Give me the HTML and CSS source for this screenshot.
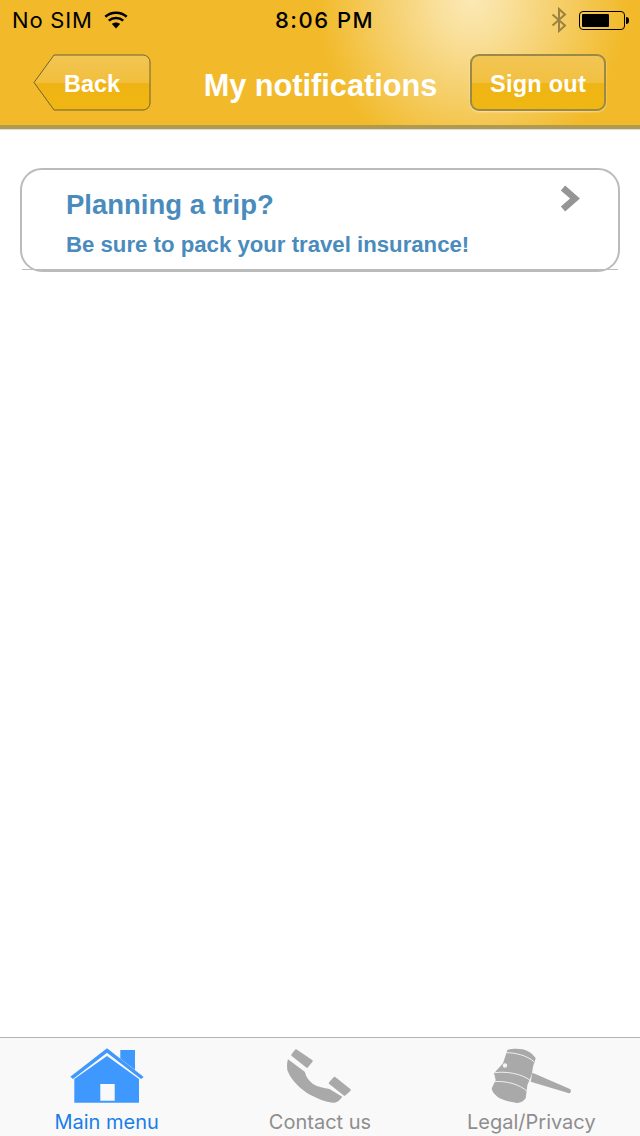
FILE: index.html
```html
<!DOCTYPE html>
<html lang="en">
<head>
    <meta charset="UTF-8">
    <meta name="viewport" content="width=device-width, initial-scale=1.0">
    <title>My notifications</title>
    <link rel="stylesheet" href="styles.css">
</head>
<body>
    <header class="top">
        <div class="status">
            <div class="status-left">
                <span class="carrier">No SIM</span>
                <svg class="wifi" width="26" height="20" viewBox="0 0 26 20">
                    <path d="M13 18.500 8.900 13.900c2.300-2 5.900-2 8.200 0z" fill="#000"/>
                    <path d="M5.800 10.600c4-3.600 10.400-3.600 14.400 0" fill="none" stroke="#000" stroke-width="2.500"/>
                    <path d="M2.300 6.800c6-5.400 15.400-5.400 21.400 0" fill="none" stroke="#000" stroke-width="2.500"/>
                </svg>
            </div>
            <div class="status-time">8:06 PM</div>
            <div class="status-right">
                <svg class="bt" width="18" height="26" viewBox="0 0 18 26">
                    <path d="M2.500 7.500 15 18.500 9 24V2l6 5.500L2.500 18.500" fill="none" stroke="#9a8240" stroke-width="2"/>
                </svg>
                <div class="battery"><div class="battery-fill"></div></div>
                <div class="battery-tip"></div>
            </div>
        </div>
        <nav class="nav">
            <a class="btn-back">
                <svg class="btn-back-bg" width="118" height="58" viewBox="0 0 118 58">
                    <defs>
                        <linearGradient id="backfill" x1="0" y1="0" x2="0" y2="1">
                            <stop offset="0" stop-color="#f2c655"/>
                            <stop offset="0.5" stop-color="#f2bf3c"/>
                            <stop offset="0.52" stop-color="#efb414"/>
                            <stop offset="1" stop-color="#f0b612"/>
                        </linearGradient>
                    </defs>
                    <path d="M1 28.500 21 1h89a7 7 0 0 1 7 7v41a7 7 0 0 1-7 7H21z" fill="url(#backfill)" stroke="#6f6232" stroke-width="1"/>
                </svg>
                <span class="btn-back-text">Back</span>
            </a>
            <h1 class="title">My notifications</h1>
            <a class="btn-signout">Sign out</a>
        </nav>
    </header>

    <main class="content">
        <div class="card">
            <div class="card-text">
                <div class="card-title">Planning a trip?</div>
                <div class="card-sub">Be sure to pack your travel insurance!</div>
            </div>
            <svg class="chevron" width="20" height="28" viewBox="0 0 20 28">
                <path d="M3 3 15 13.500 3 24" fill="none" stroke="#959595" stroke-width="6.500"/>
            </svg>
        </div>
    </main>

    <footer class="tabs">
        <div class="tab tab-active">
            <svg class="tab-icon" width="76" height="60" viewBox="0 0 76 60">
                <path d="M51.300 3H66v20L51.300 11.500z" fill="#3f98fd"/>
                <path d="M38 1.300 74.700 30 72 32 38 5.700 4 32 1.300 29.700z" fill="#3f98fd"/>
                <path fill-rule="evenodd" d="M38 9 70 32v23.700H5.300V32zM31.300 37v16.700h14.400V37z" fill="#3f98fd"/>
            </svg>
            <span>Main menu</span>
        </div>
        <div class="tab">
            <svg class="tab-icon" width="76" height="60" viewBox="0 0 76 60">
                <g fill="#a9a9a9" stroke="#a9a9a9" stroke-width="2.500" stroke-linejoin="round">
                    <path d="M14 3.500 29.500 14 25 19.500 10.500 8z"/>
                    <path d="M52.500 31 67.500 43 62.500 47.500 48 36z"/>
                </g>
                <path d="M6 12.300 22.700 24.700C24 30 27 34 31 37 36 40 42 41 47.500 42L60.300 49.700C58 53 55.500 55.700 51 55.700 42 55 33 50.500 25 46 16 40 8 31 5.300 23 4.800 19 5 15 6 12.300z" fill="#a9a9a9"/>
            </svg>
            <span>Contact us</span>
        </div>
        <div class="tab">
            <svg class="tab-icon" width="80" height="60" viewBox="0 0 80 60">
                <path d="M41.400 25.700 79 42c1.500 1 1 4.500-1 4.300L39.700 34.700z" fill="#a9a9a9"/>
                <path d="M16.400 3C21 1.500 27 1.500 31.400 2.300 37 3.500 42 7 44.700 11.300L42 19.700 40.700 28 36.400 38 34.700 51.300C32 55 28 56.500 24.700 55.700 17 54.500 10 52.500 6.400 49.700 3 47 .7 44 .7 41.300L4.700 33 3 26.300 12 16.300z" fill="#a9a9a9"/>
                <path d="M14.700 5.700C24 5.500 36 8.500 43 14.700M4 25.700C15 24 31 27 38.700 33M3 34.700C14 33.500 29 37 36.400 44.700" fill="none" stroke="#f0f0f0" stroke-width="1"/>
                <circle cx="14" cy="18.500" r="2.200" fill="#f4f4f4"/>
            </svg>
            <span>Legal/Privacy</span>
        </div>
    </footer>
</body>
</html>
```

FILE: styles.css
```css
* {
    box-sizing: border-box;
}
body {
    margin: 0;
    width: 640px;
    height: 1136px;
    display: flex;
    flex-direction: column;
    background: #fff;
    font-family: "Liberation Sans", Arial, sans-serif;
    overflow: hidden;
}
.top {
    height: 129px;
    flex: none;
    background-color: #f2ba2a;
    background-image: radial-gradient(ellipse 155px 170px at 472px 0, #fbe8b4 0%, #f9e09c 22%, #f6d274 50%, #f4c64e 75%, #f2ba2a 100%);
    border-bottom: 4px solid #b09a50;
    box-shadow: 0 1px 1px #ddd;
}
.status {
    height: 40px;
    padding: 0 11px 0 12px;
    display: flex;
    align-items: center;
    font-family: Inter, sans-serif;
    color: #000;
    font-size: 22px;
}
.status-left {
    display: flex;
    align-items: center;
    gap: 10px;
    flex: 1;
}
.carrier {
    letter-spacing: 0.8px;
}
.status-time {
    font-weight: 500;
    letter-spacing: 1.5px;
    margin-left: 8px;
}
.status-right {
    flex: 1;
    display: flex;
    align-items: center;
    justify-content: flex-end;
}
.bt {
    margin-right: 11px;
}
.battery {
    width: 46px;
    height: 19px;
    border: 1.5px solid #000;
    border-radius: 4px;
    padding: 2px;
}
.battery-fill {
    width: 27px;
    height: 100%;
    background: #000;
    border-radius: 1px;
}
.battery-tip {
    width: 3px;
    height: 7px;
    margin-left: 1px;
    background: #000;
    border-radius: 0 3px 3px 0;
}
.nav {
    height: 85px;
    padding: 14px 34px 0 33px;
    display: flex;
    align-items: flex-start;
    justify-content: space-between;
}
.btn-back {
    width: 118px;
    height: 58px;
    position: relative;
    display: flex;
    align-items: center;
    padding: 3px 0 0 31px;
    color: #fff;
    font-size: 23.5px;
    font-weight: bold;
}
.btn-back-bg {
    position: absolute;
    left: 0;
    top: 0;
}
.btn-back-text {
    position: relative;
}
.title {
    margin: 0 0 0 20px;
    height: 58px;
    line-height: 64px;
    color: #fff;
    font-size: 30.700px;
    font-weight: bold;
}
.btn-signout {
    width: 136px;
    height: 57px;
    padding-top: 3px;
    display: flex;
    align-items: center;
    justify-content: center;
    color: #fff;
    font-size: 23.5px;
    font-weight: bold;
    letter-spacing: 0.25px;
    border: 2px solid #9c8945;
    border-radius: 9px;
    background: linear-gradient(#f2c655 0%, #f2c040 50%, #efb515 52%, #f0b612 100%);
    box-shadow: 0 1px 2px rgba(255, 255, 255, 0.5);
}
.content {
    flex: 1;
    padding: 39px 20px 0;
}
.card {
    height: 104px;
    position: relative;
    border: 2px solid #bbb;
    border-radius: 22px;
    padding: 18px 38px 0 44px;
    display: flex;
    justify-content: space-between;
    align-items: flex-start;
}
.card::after {
    content: "";
    position: absolute;
    left: 0;
    right: 0;
    bottom: 0;
    height: 1px;
    background: #bbb;
}
.card-title {
    color: #4a8bbd;
    font-size: 27.500px;
    font-weight: bold;
    line-height: 34px;
}
.card-sub {
    color: #4a8bbd;
    font-size: 22.200px;
    font-weight: bold;
    line-height: 26px;
    margin-top: 10px;
}
.chevron {
    margin-top: -3px;
}
.tabs {
    height: 99px;
    flex: none;
    display: flex;
    background: #f9f9f9;
    border-top: 1px solid #b2b2b2;
}
.tab {
    flex: 0 0 33.333%;
    padding-top: 9px;
    display: flex;
    flex-direction: column;
    align-items: center;
    color: #8e8e8e;
    font-family: Inter, sans-serif;
    font-size: 20px;
    line-height: 28px;
}
.tab:last-child {
    padding-right: 4px;
}
.tab-active {
    color: #1a7ee8;
}
.tab-icon {
    display: block;
    flex: none;
    margin-bottom: 1px;
}
```
